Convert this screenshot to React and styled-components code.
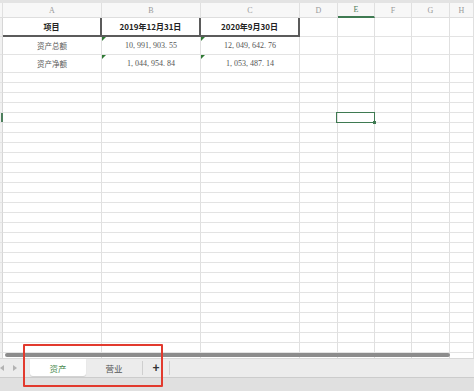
import React from "react";
import styled, { createGlobalStyle, css } from "styled-components";

const GlobalStyle = createGlobalStyle`
  html, body {
    margin: 0;
    padding: 0;
    background: #ffffff;
  }
  body {
    font-family: "Noto Sans CJK SC", "Liberation Sans", sans-serif;
  }
`;

const COLS = "3px 99px 99px 99px 38px 37px 37px 38px 1fr";
const LETTERS = ["A", "B", "C", "D", "E", "F", "G", "H"];

const Page = styled.div`
  position: relative;
  width: 474px;
  height: 391px;
  overflow: hidden;
  display: flex;
  flex-direction: column;
`;

const TopStrip = styled.div`
  height: 3px;
  background: #e3e3e3;
`;

const Sheet = styled.div`
  position: relative;
  height: 355px;
  overflow: hidden;
`;

const Row = styled.div`
  display: grid;
  grid-template-columns: ${COLS};
  height: ${(p) => p.$h}px;
`;

const Cell = styled.div`
  position: relative;
  box-sizing: border-box;
  border-right: 1px solid #e0e0e0;
  border-bottom: 1px solid #e3e3e3;
  display: flex;
  align-items: center;
  justify-content: center;
  font-size: 7.5px;
  color: #5a5a5a;
  white-space: pre;

  ${(p) =>
    p.$head &&
    css`
      border-right: 2px solid #5b5b5b;
      border-bottom: 2px solid #5b5b5b;
      font-weight: 700;
      font-size: 8px;
      color: #222;
    `}

  ${(p) =>
    p.$num &&
    css`
      font-family: "Liberation Serif", serif;
      font-size: 8px;
      color: #555;
    `}

  ${(p) =>
    p.$flag &&
    css`
      &::before {
        content: "";
        position: absolute;
        top: 0;
        left: 0;
        border-top: 4px solid #2f7a34;
        border-right: 4px solid transparent;
      }
    `}

  ${(p) =>
    p.$selected &&
    css`
      &::after {
        content: "";
        position: absolute;
        top: -1px;
        left: -2px;
        right: -1px;
        bottom: -1px;
        border: 1.5px solid #3f7a52;
      }
    `}
`;

const FillHandle = styled.span`
  position: absolute;
  right: -2px;
  bottom: -2px;
  width: 3px;
  height: 3px;
  background: #3f7a52;
  z-index: 1;
`;

const RowHead = styled.div`
  position: relative;
  box-sizing: border-box;
  background: #f1f1f1;
  border-right: 1px solid #d6d6d6;
  border-bottom: 1px solid #e3e3e3;

  ${(p) =>
    p.$active &&
    css`
      &::after {
        content: "";
        position: absolute;
        left: 1px;
        top: 0;
        width: 2px;
        height: 100%;
        background: #4d7f5d;
      }
    `}
`;

const ColHead = styled.div`
  box-sizing: border-box;
  background: #f7f7f7;
  border-right: 1px solid #e0e0e0;
  border-bottom: ${(p) => (p.$active ? "2px solid #3f7a52" : "1px solid #dedede")};
  display: flex;
  align-items: center;
  justify-content: center;
  font-family: "Liberation Serif", serif;
  font-size: 8px;
  color: ${(p) => (p.$active ? "#4b7d5b" : "#9a9a9a")};
`;

const ScrollThumb = styled.div`
  position: absolute;
  left: 5px;
  width: 445px;
  bottom: 1px;
  height: 4px;
  border-radius: 2px;
  background: #8c8c8c;
`;

const TabBar = styled.div`
  height: 19px;
  box-sizing: border-box;
  background: #ececec;
  border-top: 1px solid #d8d8d8;
  display: flex;
  align-items: stretch;
`;

const Nav = styled.div`
  width: 30px;
  display: flex;
  align-items: center;
  gap: 9px;
`;

const Tab = styled.div`
  width: 56px;
  display: flex;
  align-items: center;
  justify-content: center;
  font-size: 8.5px;
  margin-bottom: 1px;
  border-radius: 0 0 3px 3px;
  color: ${(p) => (p.$active ? "#4a8a4f" : "#555")};
  background: ${(p) => (p.$active ? "#ffffff" : "transparent")};
  box-shadow: ${(p) => (p.$active ? "0 1px 1px rgba(0,0,0,0.12)" : "none")};
`;

const Sep = styled.div`
  width: 1px;
  margin: 2px 0;
  background: #cfcfcf;
`;

const Plus = styled.div`
  width: 26px;
  display: flex;
  align-items: center;
  justify-content: center;
  font-family: "Liberation Sans", sans-serif;
  font-size: 12px;
  font-weight: 700;
  color: #333;
`;

const BottomBar = styled.div`
  flex: 1;
  background: #e0e0e0;
  border-top: 1px solid #cccccc;
`;

const Annotation = styled.div`
  position: absolute;
  left: 23px;
  top: 344px;
  width: 140px;
  height: 43px;
  box-sizing: border-box;
  border: 2px solid #e23a2e;
  border-radius: 1px;
`;

const Arrow = ({ dir }) => (
  <svg width="4" height="6" viewBox="0 0 4 6">
    <path d={dir === "left" ? "M4 0 L0 3 L4 6 Z" : "M0 0 L4 3 L0 6 Z"} fill="#b3b3b3" />
  </svg>
);

const data = [
  { name: "资产总额", b: "10, 991, 903. 55", c: "12, 049, 642. 76" },
  { name: "资产净额", b: "1, 044, 954. 84", c: "1, 053, 487. 14" },
];

const SELECTED_ROW = 4;

export default function App() {
  const empty = Array.from({ length: 30 }, (_, i) => i);

  return (
    <Page>
      <GlobalStyle />
      <TopStrip />
      <Sheet>
        <Row $h={15}>
          <ColHead />
          {LETTERS.map((l) => (
            <ColHead key={l} $active={l === "E"}>
              {l}
            </ColHead>
          ))}
        </Row>

        <Row $h={19}>
          <RowHead />
          <Cell $head>项目</Cell>
          <Cell $head>2019年12月31日</Cell>
          <Cell $head>2020年9月30日</Cell>
          <Cell />
          <Cell />
          <Cell />
          <Cell />
          <Cell />
        </Row>

        {data.map((d) => (
          <Row $h={18} key={d.name}>
            <RowHead />
            <Cell>{d.name}</Cell>
            <Cell $num $flag>
              {d.b}
            </Cell>
            <Cell $num $flag>
              {d.c}
            </Cell>
            <Cell />
            <Cell />
            <Cell />
            <Cell />
            <Cell />
          </Row>
        ))}

        {empty.map((i) => (
          <Row $h={10} key={i}>
            <RowHead $active={i === SELECTED_ROW} />
            {LETTERS.map((l) =>
              l === "E" && i === SELECTED_ROW ? (
                <Cell key={l} $selected>
                  <FillHandle />
                </Cell>
              ) : (
                <Cell key={l} />
              )
            )}
          </Row>
        ))}

        <ScrollThumb />
      </Sheet>

      <TabBar>
        <Nav>
          <Arrow dir="left" />
          <Arrow dir="right" />
        </Nav>
        <Tab $active>资产</Tab>
        <Tab>营业</Tab>
        <Sep />
        <Plus>+</Plus>
        <Sep />
      </TabBar>
      <BottomBar />

      <Annotation />
    </Page>
  );
}
